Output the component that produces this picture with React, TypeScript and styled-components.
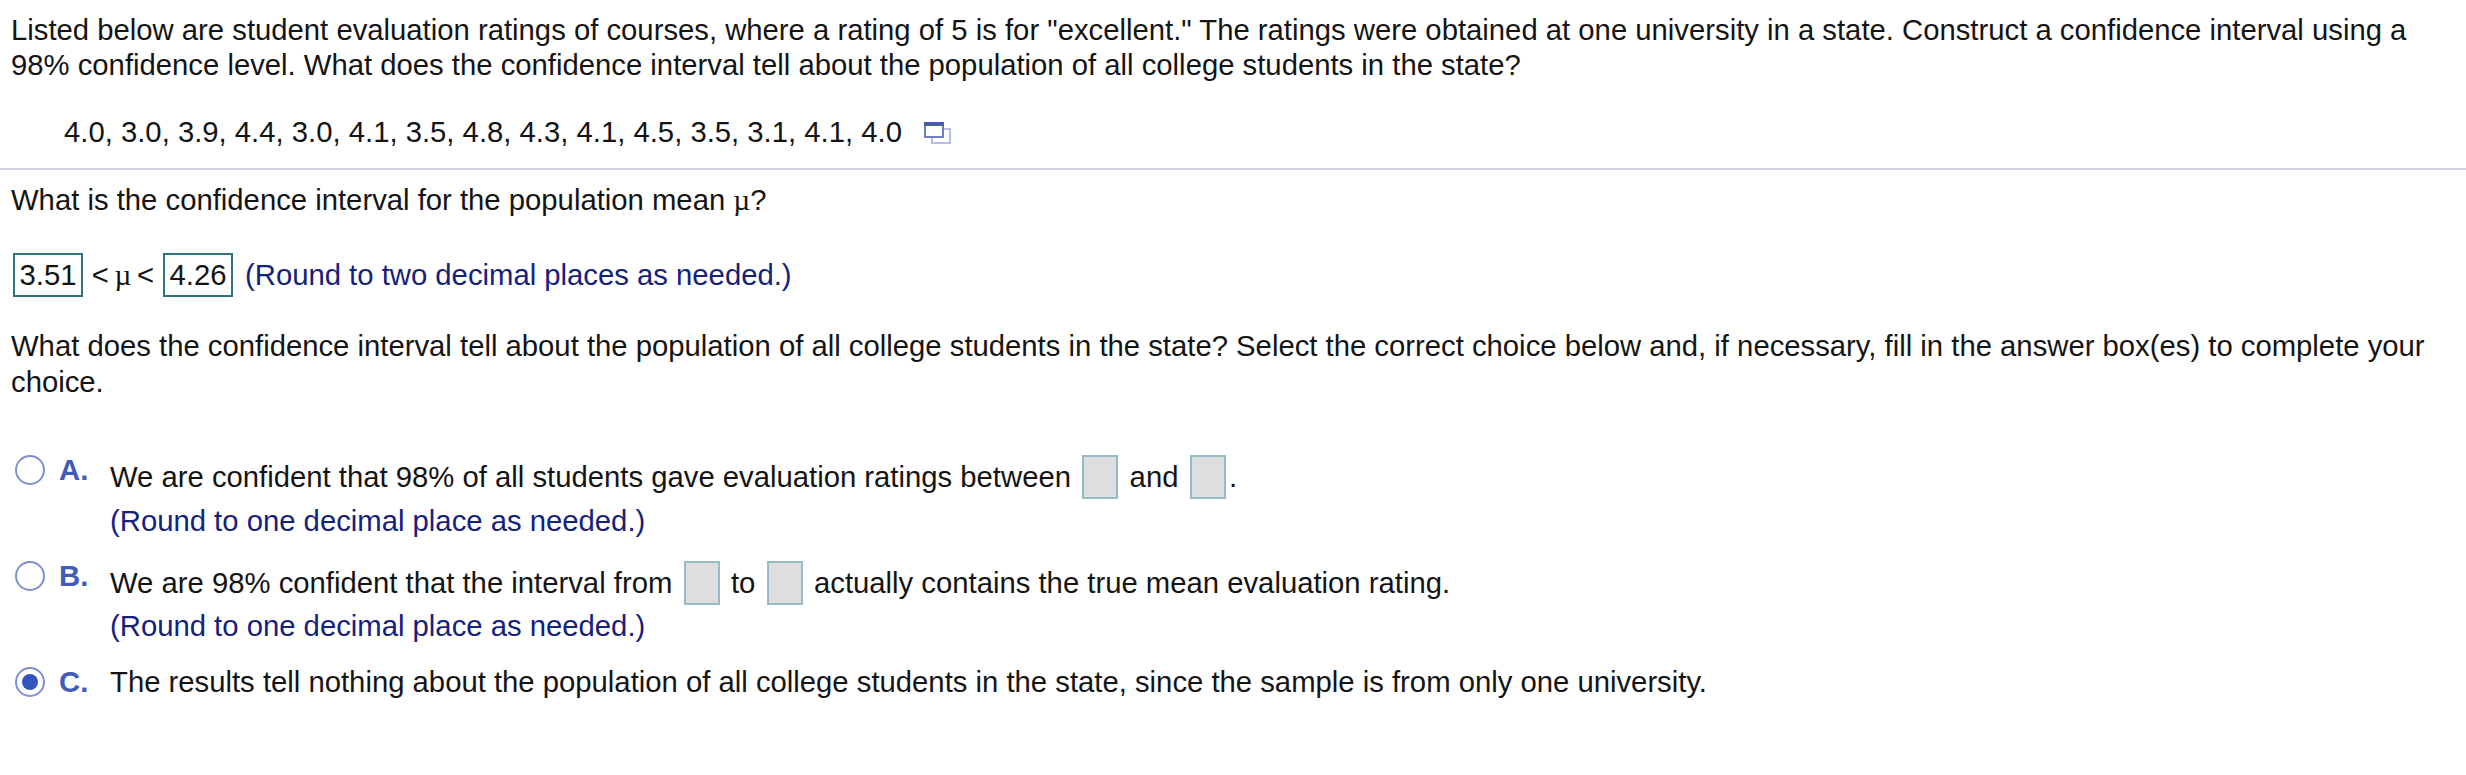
import styled, { createGlobalStyle } from "styled-components";

const GlobalStyle = createGlobalStyle`
  html, body {
    margin: 0;
    padding: 0;
    background: #fff;
  }
  body {
    font-family: "Liberation Sans", Arial, sans-serif;
    font-size: 29.27px;
    color: #141414;
  }
`;

const CopyIcon = () => (
  <svg width="27" height="22" viewBox="0 0 27 22">
    <rect x="8" y="7" width="18" height="14" fill="#fff" stroke="#b4bde4" strokeWidth="2" />
    <rect x="1" y="1" width="18" height="14" fill="#fff" stroke="#6f7fbe" strokeWidth="2" />
    <rect x="0" y="0" width="20" height="4" fill="#4a5ea8" />
  </svg>
);

const Radio = ({ checked }: { checked?: boolean }) => (
  <RadioCircle>{checked && <RadioDot />}</RadioCircle>
);

const App = () => {
  return (
    <Page>
      <GlobalStyle />
      <Question>
        Listed below are student evaluation ratings of courses, where a rating of 5 is for "excellent." The ratings
        were obtained at one university in a state. Construct a confidence interval using a 98% confidence level. What
        does the confidence interval tell about the population of all college students in the state?
      </Question>
      <DataRow>
        <span>4.0, 3.0, 3.9, 4.4, 3.0, 4.1, 3.5, 4.8, 4.3, 4.1, 4.5, 3.5, 3.1, 4.1, 4.0</span>
        <CopyIcon />
      </DataRow>
      <Rule />
      <Prompt>
        What is the confidence interval for the population mean <Mu>µ</Mu>?
      </Prompt>
      <AnswerRow>
        <AnswerBox>3.51</AnswerBox>
        <Relation>
          &lt; <Mu>µ</Mu> &lt;
        </Relation>
        <AnswerBox>4.26</AnswerBox>
        <Hint>(Round to two decimal places as needed.)</Hint>
      </AnswerRow>
      <Instruction>
        What does the confidence interval tell about the population of all college students in the state? Select the
        correct choice below and, if necessary, fill in the answer box(es) to complete your choice.
      </Instruction>
      <Choices>
        <Choice $top={0}>
          <Radio />
          <ChoiceLetter>A.</ChoiceLetter>
          <ChoiceBody $offset={4}>
            <ChoiceLine>
              We are confident that 98% of all students gave evaluation ratings between <BlankBox /> and <BlankBox />.
            </ChoiceLine>
            <ChoiceHint $gap={8}>(Round to one decimal place as needed.)</ChoiceHint>
          </ChoiceBody>
        </Choice>
        <Choice $top={22}>
          <Radio />
          <ChoiceLetter>B.</ChoiceLetter>
          <ChoiceBody $offset={4}>
            <ChoiceLine>
              We are 98% confident that the interval from <BlankBox /> to <BlankBox /> actually contains the true mean
              evaluation rating.
            </ChoiceLine>
            <ChoiceHint $gap={7}>(Round to one decimal place as needed.)</ChoiceHint>
          </ChoiceBody>
        </Choice>
        <Choice $top={23}>
          <Radio checked />
          <ChoiceLetter>C.</ChoiceLetter>
          <ChoiceBody $offset={-3}>
            <ChoiceLine>
              The results tell nothing about the population of all college students in the state, since the sample is
              from only one university.
            </ChoiceLine>
          </ChoiceBody>
        </Choice>
      </Choices>
    </Page>
  );
};

export default App;

const Page = styled.div`
  width: 2466px;
  height: 775px;
  overflow: hidden;
  background: #fff;
`;

const Question = styled.p`
  margin: 0;
  padding: 13px 0 0 11px;
  line-height: 35px;
`;

const DataRow = styled.div`
  display: flex;
  align-items: center;
  gap: 22px;
  margin-top: 32px;
  padding-left: 64px;
  height: 35px;
`;

const Rule = styled.div`
  height: 2px;
  margin-top: 18px;
  background: #ccd3da;
`;

const Prompt = styled.p`
  margin: 13px 0 0;
  padding-left: 11px;
  line-height: 35px;
`;

const Mu = styled.span`
  font-family: "Liberation Serif", "Times New Roman", serif;
`;

const AnswerRow = styled.div`
  display: flex;
  align-items: center;
  margin: 35px 0 0 13px;
  height: 44px;
`;

const AnswerBox = styled.span`
  box-sizing: border-box;
  width: 70px;
  height: 44px;
  display: flex;
  align-items: center;
  justify-content: center;
  border: 2px solid #2f7385;
`;

const Relation = styled.span`
  width: 80px;
  text-align: center;
  word-spacing: -2.5px;
`;

const Hint = styled.span`
  margin-left: 12px;
  color: #14217d;
`;

const Instruction = styled.p`
  margin: 31px 0 0;
  padding: 0 0 0 11px;
  line-height: 36px;
`;

const Choices = styled.div`
  margin: 55px 0 0 15px;
`;

const Choice = styled.div<{ $top: number }>`
  display: flex;
  align-items: flex-start;
  margin-top: ${({ $top }) => $top}px;
`;

const RadioCircle = styled.span`
  box-sizing: border-box;
  flex: none;
  width: 30px;
  height: 30px;
  display: flex;
  align-items: center;
  justify-content: center;
  border: 2.5px solid #7f90cf;
  border-radius: 50%;
`;

const RadioDot = styled.span`
  width: 16px;
  height: 16px;
  border-radius: 50%;
  background: #3355c0;
`;

const ChoiceLetter = styled.span`
  flex: none;
  width: 51px;
  margin-left: 14px;
  font-weight: 700;
  color: #3f5cba;
  line-height: 30px;
`;

const ChoiceBody = styled.div<{ $offset: number }>`
  display: flex;
  flex-direction: column;
  margin-top: ${({ $offset }) => $offset}px;
`;

const ChoiceLine = styled.div`
  line-height: 36px;
`;

const ChoiceHint = styled.div<{ $gap: number }>`
  margin-top: ${({ $gap }) => $gap}px;
  line-height: 36px;
  color: #14217d;
`;

const BlankBox = styled.span`
  box-sizing: border-box;
  display: inline-block;
  width: 36px;
  height: 44px;
  margin: -10px 3.2px -6px;
  vertical-align: middle;
  background: #dedede;
  border: 2px solid #96bdc6;
`;
